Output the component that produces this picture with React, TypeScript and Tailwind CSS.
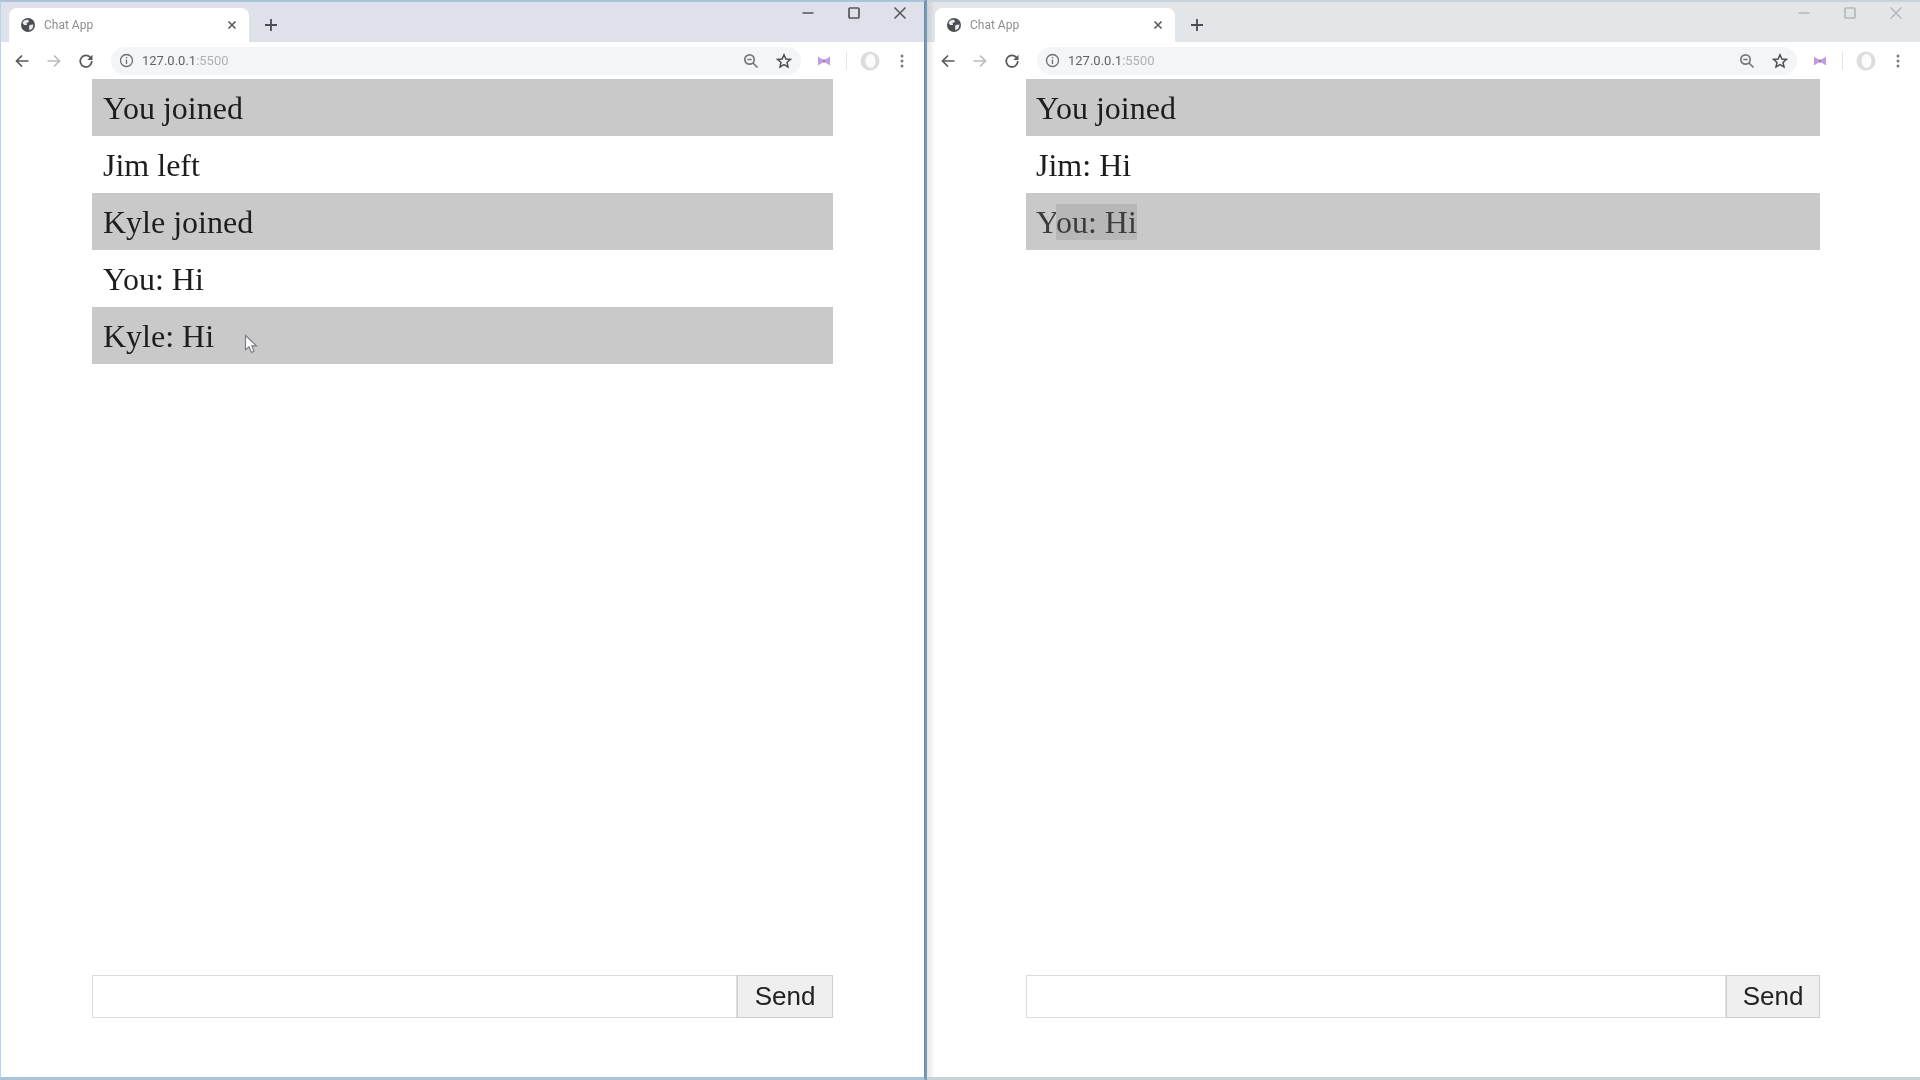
import React from "react";

const serif = "font-['Liberation_Serif',serif]";

function Globe() {
  return (
    <svg width="16" height="16" viewBox="0 0 16 16">
      <circle cx="8" cy="8" r="7" fill="#4a4d52" />
      <path d="M4 3.5 L8 2.5 L9 5 L6.5 6 L7 8 L4 8 L2.5 6 Z M9.5 8 L13.5 7.5 L12.5 11.5 L9.5 13.5 L9 10.5 Z" fill="#e8eaed" />
    </svg>
  );
}

function Arrow({ dir, color }: { dir: "l" | "r"; color: string }) {
  return (
    <svg width="16" height="16" viewBox="0 0 16 16" fill="none" stroke={color} strokeWidth="1.7" className={dir === "r" ? "-scale-x-100" : ""}>
      <path d="M14.5 8H2.5M8 2.5 2.5 8 8 13.5" />
    </svg>
  );
}

function Reload() {
  return (
    <svg width="16" height="16" viewBox="0 0 16 16" fill="none">
      <path d="M13 5.2A5.8 5.8 0 1 0 13.8 8" stroke="#55585d" strokeWidth="1.7" />
      <path d="M14.5 1.8V7H9.3Z" fill="#55585d" />
    </svg>
  );
}

function Info() {
  return (
    <svg width="15" height="15" viewBox="0 0 15 15" fill="none" stroke="#6b6e73" strokeWidth="1.3">
      <circle cx="7.5" cy="7.5" r="6" />
      <path d="M7.5 6.5V11M7.5 4V5.3" />
    </svg>
  );
}

function Zoom() {
  return (
    <svg width="16" height="16" viewBox="0 0 16 16" fill="none" stroke="#75787d" strokeWidth="1.7">
      <circle cx="6.5" cy="6.5" r="4.7" />
      <path d="M10 10l4.5 4.5M4.3 6.5h4.4" />
    </svg>
  );
}

function Star() {
  return (
    <svg width="16" height="16" viewBox="0 0 16 16" fill="none" stroke="#4c4f54" strokeWidth="1.5">
      <path d="M8 1.8 9.9 6l4.5.4-3.4 3 1 4.5L8 11.6l-4 2.3 1-4.5-3.4-3L6.100 6Z" />
    </svg>
  );
}

function Bow() {
  return (
    <svg width="14" height="12" viewBox="0 0 14 12">
      <path d="M1 1.500 5.500 4.500V7.500L1 10.500ZM13 1.500 8.500 4.500V7.500L13 10.500Z" fill="#c39ade" />
      <rect x="5.500" y="4.500" width="3" height="3" fill="#a56ec9" />
    </svg>
  );
}

function Avatar() {
  return (
    <svg width="20" height="20" viewBox="0 0 20 20" fill="none">
      <circle cx="10" cy="10" r="9.500" fill="#dcddde" />
      <ellipse cx="10.500" cy="10" rx="5" ry="7" fill="#fbfbfb" />
    </svg>
  );
}

function Dots() {
  return (
    <svg width="4" height="14" viewBox="0 0 4 14" fill="#777a7e">
      <circle cx="2" cy="2" r="1.500" />
      <circle cx="2" cy="7" r="1.500" />
      <circle cx="2" cy="12" r="1.500" />
    </svg>
  );
}

function WinControls({ faded }: { faded: boolean }) {
  const c = faded ? "#b4b8bb" : "#53565b";
  return (
    <div className="ml-auto -mt-[2px] flex items-start">
      <svg width="14" height="14" viewBox="0 0 14 14" fill="none" stroke={c} strokeWidth="1.500" className="mr-[32px]">
        <path d="M1.500 7h11" />
      </svg>
      <svg width="14" height="14" viewBox="0 0 14 14" fill="none" stroke={c} strokeWidth="1.700" className="mr-[32px]">
        <rect x="2" y="2" width="10" height="10" rx="1" />
      </svg>
      <svg width="14" height="14" viewBox="0 0 14 14" fill="none" stroke={c} strokeWidth="1.500" className="mr-[17px]">
        <path d="M1.500 1.500l11 11M12.500 1.500l-11 11" />
      </svg>
    </div>
  );
}

function Chrome({ faded }: { faded: boolean }) {
  return (
    <div className="shrink-0">
      <div className={`flex h-[40px] pl-[8px] pt-[6px] ${faded ? "bg-[#e3e6e9]" : "bg-[#dee1e9]"}`}>
        <div className="flex h-[34px] w-[240px] items-center rounded-t-lg bg-white pl-[11px] pr-[12px]">
          <Globe />
          <span className="ml-[8px] font-['Roboto',sans-serif] text-[12px] text-[#8b8d90]">Chat App</span>
          <svg width="10" height="10" viewBox="0 0 10 10" fill="none" stroke="#55585d" strokeWidth="1.600" className="ml-auto">
            <path d="M1.500 1.500l7 7M8.500 1.500l-7 7" />
          </svg>
        </div>
        <svg width="14" height="14" viewBox="0 0 14 14" fill="none" stroke="#4a4d52" strokeWidth="1.800" className="ml-[15px] mt-[10px]">
          <path d="M7 1v12M1 7h12" />
        </svg>
        <WinControls faded={faded} />
      </div>
      <div className="flex h-[37px] items-center bg-white pl-[13px] pr-[20px]">
        <Arrow dir="l" color="#55585d" />
        <div className="ml-[16px]"><Arrow dir="r" color="#b9bbbe" /></div>
        <div className="ml-[16px]"><Reload /></div>
        <div className="ml-[17px] flex h-[28px] flex-1 items-center rounded-full bg-[#f4f5f6] pl-[8px] pr-[9px]">
          <Info />
          <span className="ml-[8px] font-['Roboto',sans-serif] text-[13px] text-[#5f6368]">
            127.0.0.1<span className="text-[#b0b2b5]">:5500</span>
          </span>
          <div className="ml-auto flex items-center gap-[17px]">
            <Zoom />
            <Star />
          </div>
        </div>
        <div className="ml-[16px]"><Bow /></div>
        <div className="ml-[15px] h-[18px] w-px bg-[#e3e4e6]" />
        <div className="ml-[13px]"><Avatar /></div>
        <div className="ml-[20px]"><Dots /></div>
      </div>
    </div>
  );
}

function Row({ shaded, textPad, children }: { shaded: boolean; textPad: string; children: React.ReactNode }) {
  return (
    <li className={`flex h-[57px] items-center ${textPad} text-[32px] leading-[36px] text-[#1d1d1d] ${serif} ${shaded ? "bg-[#c9c9c9]" : ""}`}>
      <span className="whitespace-pre">{children}</span>
    </li>
  );
}

function Window({
  className,
  pl,
  pr,
  textPad,
  inputW,
  faded,
  rows,
  children,
}: {
  className: string;
  pl: string;
  pr: string;
  textPad: string;
  inputW: string;
  faded: boolean;
  rows: React.ReactNode[];
  children?: React.ReactNode;
}) {
  return (
    <div className={`relative flex h-full flex-col ${className}`}>
      <Chrome faded={faded} />
      <div className={`flex min-h-0 flex-1 flex-col bg-white ${pl} ${pr}`}>
        <ul className="flex-1">
          {rows.map((r, i) => (
            <Row key={i} shaded={i % 2 === 0} textPad={textPad}>{r}</Row>
          ))}
        </ul>
        <form className="mb-[59px] flex h-[43px]">
          <input className={`h-full ${inputW} border border-[#dcdcdc] bg-white outline-none`} />
          <button type="button" className="h-full flex-1 border border-[#cfcfcf] bg-[#efefef] font-['Liberation_Sans',sans-serif] text-[26px] text-[#222]">
            Send
          </button>
        </form>
      </div>
      {children}
    </div>
  );
}

export default function App() {
  return (
    <div className="flex h-screen w-full overflow-hidden bg-white blur-[0.5px]">
      <Window
        className="w-[925px] border-x-[1.5px] border-t-[2px] border-b-[3px] border-[#a9c4da] border-l-[#bcd2e4] border-r-[#6f8ba3]"
        pl="pl-[91px]"
        pr="pr-[91px]"
        textPad="pl-[11px]"
        inputW="w-[645px]"
        faded={false}
        rows={["You joined", "Jim left", "Kyle joined", "You: Hi", "Kyle: Hi"]}
      >
        <svg width="15" height="20" viewBox="0 0 15 20" className="absolute left-[243px] top-[332px]">
          <path d="M1.500 1.500V16L5 12.800 7.500 18.500 10 17.300 7.800 11.800H12.500Z" fill="#fff" stroke="#7b7f84" strokeWidth="1.200" />
        </svg>
      </Window>
      <div className="w-[2px] shrink-0 bg-[#7f98ad]" />
      <Window
        className="flex-1 border-t-[2px] border-b-[3px] border-[#c8d2d9]"
        pl="pl-[99px]"
        pr="pr-[100px]"
        textPad="pl-[10px]"
        inputW="w-[700px]"
        faded={true}
        rows={[
          "You joined",
          "Jim: Hi",
          <span key="y" className="text-[#3c3c3c]">
            Y<span className="bg-[#b7b7b7]">ou: Hi</span>
          </span>,
        ]}
      >
        <div className="pointer-events-none absolute inset-y-0 left-0 w-[8px] bg-gradient-to-r from-black/10 to-transparent" />
      </Window>
    </div>
  );
}
